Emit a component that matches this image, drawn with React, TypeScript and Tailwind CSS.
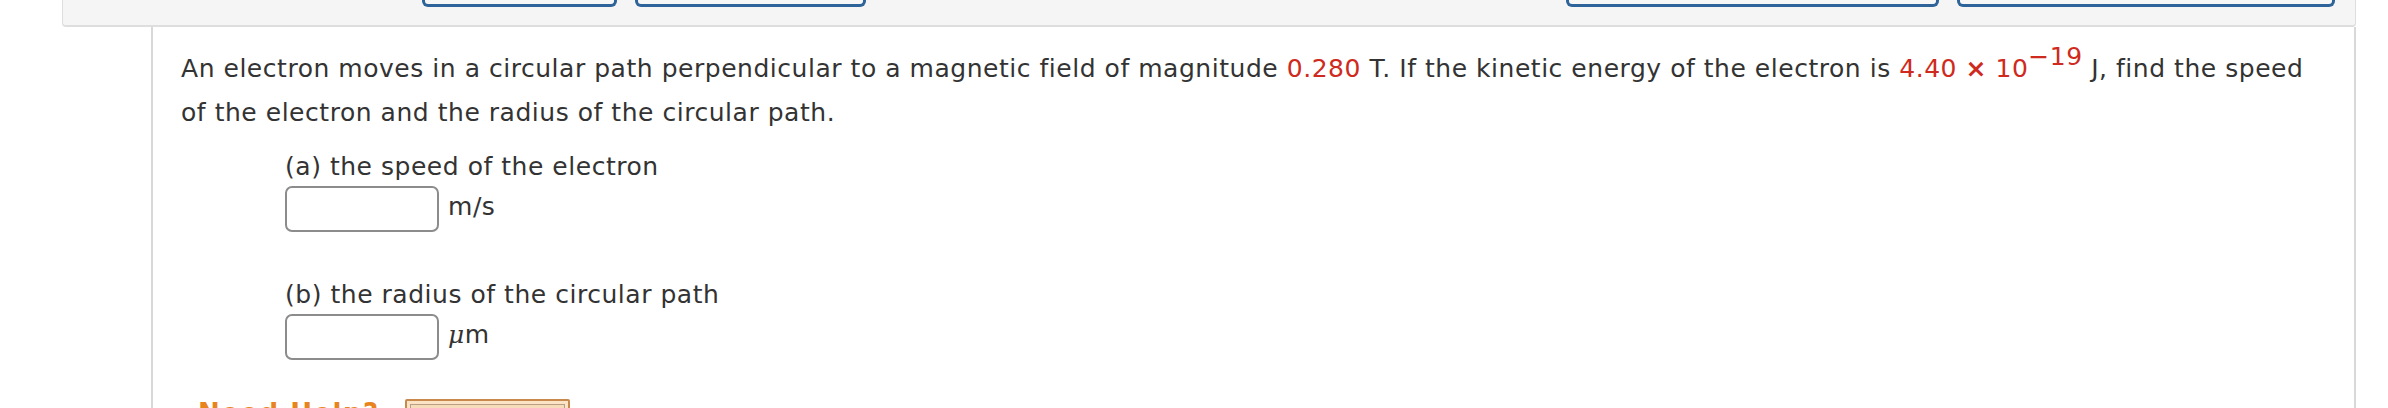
import React from "react";

const red = "text-[#cf2a20]";

const AnswerRow = ({ label, unit }: { label: string; unit: React.ReactNode }) => (
  <div className="flex flex-col">
    <div className="leading-[38px]">{label}</div>
    <div className="flex items-start gap-[9px]">
      <input
        type="text"
        className="h-[46px] w-[154px] rounded-[7px] border-2 border-[#8c8c8c] bg-white outline-none"
      />
      <span className="leading-[42px]">{unit}</span>
    </div>
  </div>
);

export default function App() {
  return (
    <div
      className="h-[408px] w-full overflow-hidden bg-white text-[25px] tracking-[0.53px] text-[#333333]"
      style={{ fontFamily: '"DejaVu Sans", Verdana, sans-serif' }}
    >
      {/* toolbar panel, top cut off */}
      <div className="ml-[62px] flex h-[27px] w-[2294px] items-start rounded-b-[4px] border-x border-b-2 border-[#dedede] bg-[#f5f5f5] pl-[359px] pr-[20px]">
        <div className="h-[7px] w-[195px] rounded-b-[6px] border-x-[3px] border-b-[3px] border-[#2e6499] bg-[#f7f7f7]" />
        <div className="ml-[18px] h-[7px] w-[231px] rounded-b-[6px] border-x-[3px] border-b-[3px] border-[#2e6499] bg-[#f7f7f7]" />
        <div className="flex-1" />
        <div className="h-[7px] w-[373px] rounded-b-[6px] border-x-[3px] border-b-[3px] border-[#2e6499] bg-[#f7f7f7]" />
        <div className="ml-[18px] h-[7px] w-[378px] rounded-b-[6px] border-x-[3px] border-b-[3px] border-[#2e6499] bg-[#f7f7f7]" />
      </div>

      {/* question body */}
      <div className="ml-[151px] h-[381px] w-[2205px] border-x-2 border-[#d8d8d8] pl-[28px] pr-[30px] pt-[20px]">
        <p className="leading-[44px]">
          An electron moves in a circular path perpendicular to a magnetic field of magnitude{" "}
          <span className={red}>0.280</span> T. If the kinetic energy of the electron is{" "}
          <span className={red}>
            4.40 <span className="font-bold">×</span> 10
            <span className="relative -top-[12px]">−19</span>
          </span>{" "}
          J, find the speed of the electron and the radius of the circular path.
        </p>

        <div className="ml-[104px] mt-[13px] flex flex-col gap-[44px]">
          <AnswerRow label="(a) the speed of the electron" unit="m/s" />
          <AnswerRow
            label="(b) the radius of the circular path"
            unit={
              <span>
                <i style={{ fontFamily: '"DejaVu Serif", serif' }}>μ</i>m
              </span>
            }
          />
        </div>

        <div className="ml-[17px] mt-[39px] flex items-start gap-[21px]">
          <span className="mt-[1px] w-[186px] whitespace-nowrap text-[26px] font-bold leading-[26px] tracking-[1.5px] text-[#e8841e]">
            Need Help?
          </span>
          <button className="h-[40px] w-[165px] rounded-[2px] border-2 border-[#c88a4c] bg-[#fbe4c6] p-[3px]">
            <div className="h-full w-full border border-[#b9a084] bg-[#f6dcbb]" />
          </button>
        </div>
      </div>
    </div>
  );
}
